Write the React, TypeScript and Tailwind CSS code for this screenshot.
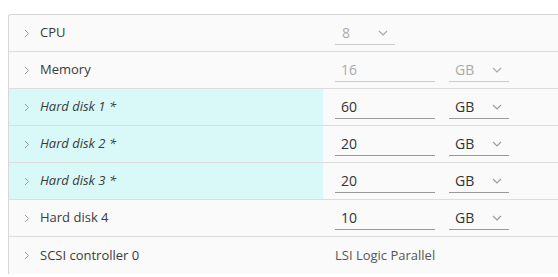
import React from "react";

const Chevron = () => (
  <svg width="6" height="9" viewBox="0 0 6 9" className="shrink-0">
    <polyline points="1,1 4.5,4.5 1,8" fill="none" stroke="#9a9a9a" strokeWidth="1" />
  </svg>
);

const Down = ({ color }: { color: string }) => (
  <svg width="10" height="6" viewBox="0 0 10 6" className="shrink-0">
    <polyline points="1,1 5,5 9,1" fill="none" stroke={color} strokeWidth="1.1" />
  </svg>
);

type Row = {
  label: string;
  modified?: boolean;
  kind: "cpu" | "mem" | "disk" | "text";
  value?: string;
};

const rows: Row[] = [
  { label: "CPU", kind: "cpu", value: "8" },
  { label: "Memory", kind: "mem", value: "16" },
  { label: "Hard disk 1 *", modified: true, kind: "disk", value: "60" },
  { label: "Hard disk 2 *", modified: true, kind: "disk", value: "20" },
  { label: "Hard disk 3 *", modified: true, kind: "disk", value: "20" },
  { label: "Hard disk 4", kind: "disk", value: "10" },
  { label: "SCSI controller 0", kind: "text", value: "LSI Logic Parallel" },
];

export default function App() {
  return (
    <div
      className="w-[558px] h-[277px] overflow-hidden bg-white pl-[8px] pt-[14px]"
      style={{ fontFamily: "'Open Sans', Lato, sans-serif" }}
    >
      <div className="w-[600px] border-t border-l border-[#d7d7d7] rounded-tl-[3px] bg-[#fafafa]">
        {rows.map((r, i) => (
          <div
            key={i}
            className={`flex h-[37px] ${i < rows.length - 1 ? "border-b border-[#dddddd]" : ""}`}
          >
            <div
              className={`w-[314px] flex items-center pl-[15px] gap-[10px] ${
                r.modified ? "bg-[#d9f8f8]" : ""
              }`}
            >
              <Chevron />
              <span
                className={`text-[13px] text-[#3a3a3a] ${r.modified ? "italic" : ""}`}
              >
                {r.label}
              </span>
            </div>
            {r.kind === "text" ? (
              <div className="flex items-center pl-[12px]">
                <span className="text-[13px] text-[#565656]">{r.value}</span>
              </div>
            ) : (
              <div className="flex items-start pl-[12px] pt-[6px] gap-[14px]">
                {r.kind === "cpu" && (
                  <div className="w-[60px] h-[24px] border-b border-[#cccccc] flex items-center justify-between pl-[7px] pr-[7px]">
                    <span className="text-[14px] text-[#aaaaaa]">{r.value}</span>
                    <Down color="#a8a8a8" />
                  </div>
                )}
                {r.kind === "mem" && (
                  <>
                    <div className="w-[100px] h-[24px] border-b border-[#cccccc] flex items-center pl-[6px]">
                      <span className="text-[14px] text-[#aaaaaa]">{r.value}</span>
                    </div>
                    <div className="w-[60px] h-[24px] border-b border-[#cccccc] flex items-center justify-between pl-[6px] pr-[7px]">
                      <span className="text-[14px] text-[#aaaaaa]">GB</span>
                      <Down color="#a8a8a8" />
                    </div>
                  </>
                )}
                {r.kind === "disk" && (
                  <>
                    <div className="w-[100px] h-[24px] border-b border-[#9a9a9a] flex items-center pl-[6px]">
                      <span className="text-[14px] text-[#333333]">{r.value}</span>
                    </div>
                    <div className="w-[60px] h-[24px] border-b border-[#9a9a9a] flex items-center justify-between pl-[6px] pr-[7px]">
                      <span className="text-[14px] text-[#333333]">GB</span>
                      <Down color="#9a9a9a" />
                    </div>
                  </>
                )}
              </div>
            )}
          </div>
        ))}
      </div>
    </div>
  );
}
